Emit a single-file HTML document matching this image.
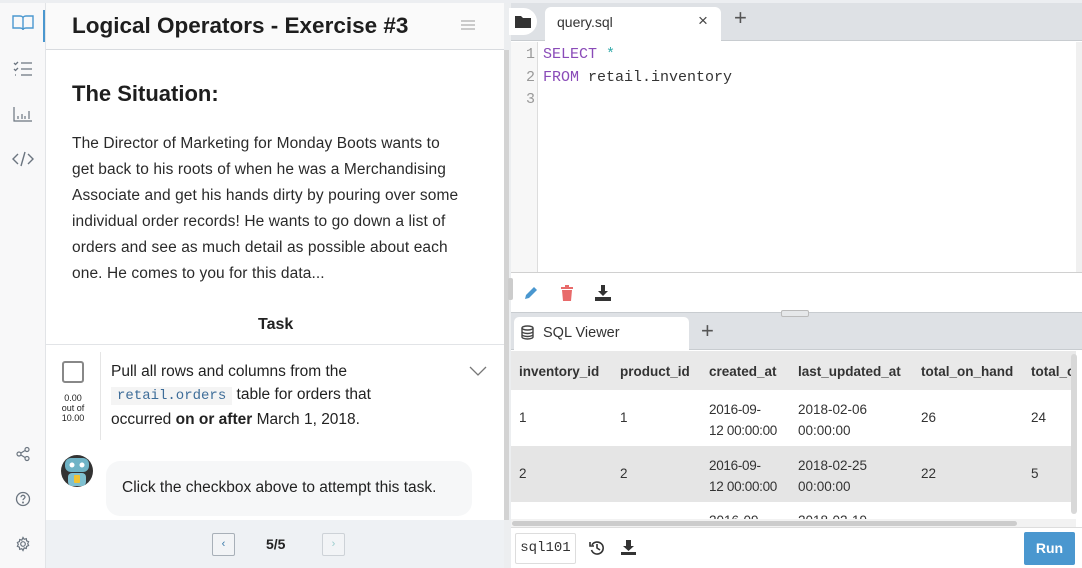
<!DOCTYPE html>
<html><head><meta charset="utf-8"><style>
*{box-sizing:border-box;margin:0;padding:0}
body{width:1082px;height:568px;overflow:hidden;background:#fff;font-family:"Liberation Sans",sans-serif;color:#222;position:relative}
.abs{position:absolute}
.mono{font-family:"Liberation Mono",monospace}
.nw{white-space:nowrap}
</style></head><body>
<div class="abs" style="left:0;top:0;width:1082px;height:3px;background:#eceef1"></div>
<div class="abs" style="left:0;top:3px;width:46px;height:565px;background:#f8f8f9;border-right:1px solid #e2e4e7"></div>
<div class="abs" style="left:43px;top:10px;width:2px;height:32px;background:#4a97cf"></div>
<svg class="abs" style="left:12px;top:14px" width="22" height="18" viewBox="0 0 22 18" fill="none" stroke="#4a97cf" stroke-width="1.4"><path d="M1 2h7c2 0 3 1 3 2v12c0-1-1-2-3-2H1z M21 2h-7c-2 0-3 1-3 2v12c0-1 1-2 3-2h7z"/></svg>
<svg class="abs" style="left:13px;top:61px" width="20" height="16" viewBox="0 0 20 16" fill="none" stroke="#6b7580" stroke-width="1.3"><path d="M1 2l1.5 1.5L5 1 M8 2h11 M1 8l1.5 1.5L5 7 M8 8h11 M2 14h1 M8 14h11"/></svg>
<svg class="abs" style="left:13px;top:106px" width="20" height="16" viewBox="0 0 20 16" fill="none" stroke="#6b7580" stroke-width="1.2"><path d="M1 1v14h18 M5 13v-3 M9 13v-5 M12 13v-3 M16 13v-8"/></svg>
<svg class="abs" style="left:11px;top:150px" width="24" height="18" viewBox="0 0 24 18" fill="none" stroke="#6b7580" stroke-width="1.4"><path d="M7 4L2 9l5 5 M17 4l5 5-5 5 M14 2l-4 14"/></svg>
<svg class="abs" style="left:15px;top:446px" width="16" height="16" viewBox="0 0 16 16" fill="none" stroke="#6b7580" stroke-width="1.2"><circle cx="4" cy="8" r="2"/><circle cx="12" cy="3.5" r="2"/><circle cx="12" cy="12.5" r="2"/><path d="M6 7l4-2.5 M6 9l4 2.5"/></svg>
<svg class="abs" style="left:15px;top:491px" width="16" height="16" viewBox="0 0 16 16" fill="none" stroke="#6b7580" stroke-width="1.3"><circle cx="8" cy="8" r="6.5"/><path d="M6 6.3c0-1.2 1-2 2-2s2 .8 2 1.8c0 1.5-2 1.5-2 3"/><circle cx="8" cy="11.5" r=".4"/></svg>
<svg class="abs" style="left:15px;top:536px" width="16" height="16" viewBox="0 0 16 16" fill="none" stroke="#6b7580" stroke-width="1.2"><circle cx="8" cy="8" r="2.3"/><path d="M8 1.5l1.2 1.8 2.1-.6.3 2.1 2 .9-.9 1.9.9 1.9-2 .9-.3 2.1-2.1-.6L8 14.5l-1.2-1.8-2.1.6-.3-2.1-2-.9.9-1.9-.9-1.9 2-.9.3-2.1 2.1.6z"/></svg>

<div class="abs" style="left:46px;top:3px;width:458px;height:47px;background:#fafafa;border-bottom:1px solid #d8dbdf"></div>
<div class="abs nw" style="left:72px;top:13px;font-size:22.5px;font-weight:bold;color:#1e1e1e">Logical Operators - Exercise #3</div>
<svg class="abs" style="left:461px;top:20px" width="14" height="10"><path d="M0 1h14M0 5h14M0 9h14" stroke="#999" stroke-width="1"/></svg>
<div class="abs" style="left:504px;top:3px;width:7px;height:565px;background:#eceef0"></div>
<div class="abs" style="left:504px;top:50px;width:5px;height:470px;background:#d3d3d3"></div>

<div class="abs nw" style="left:72px;top:81px;font-size:22px;font-weight:bold;color:#1e1e1e">The Situation:</div>
<div class="abs nw" style="left:72px;top:131px;font-size:15.5px;line-height:26px;color:#2a2a2a;letter-spacing:0.1px">The Director of Marketing for Monday Boots wants to<br>get back to his roots of when he was a Merchandising<br>Associate and get his hands dirty by pouring over some<br>individual order records! He wants to go down a list of<br>orders and see as much detail as possible about each<br>one. He comes to you for this data...</div>
<div class="abs" style="left:258px;top:316px;font-size:16px;font-weight:bold;color:#222">Task</div>
<div class="abs" style="left:46px;top:344px;width:458px;height:1px;background:#e2e4e7"></div>
<div class="abs" style="left:62px;top:361px;width:22px;height:22px;border:2px solid #888;border-radius:3px"></div>
<div class="abs" style="left:56px;top:393px;width:34px;text-align:center;font-size:9px;line-height:10px;color:#222">0.00<br>out of<br>10.00</div>
<div class="abs" style="left:100px;top:352px;width:1px;height:88px;background:#e5e5e5"></div>
<div class="abs nw" style="left:111px;top:360px;font-size:15.5px;line-height:23px;color:#222">Pull all rows and columns from the<br><span class="mono" style="background:#f4f4f4;color:#3e6d99;font-size:14px;padding:1px 6px">retail.orders</span> table for orders that<br>occurred <b>on or after</b> March 1, 2018.</div>
<svg class="abs" style="left:469px;top:366px" width="18" height="10"><path d="M1 1l8 8 8-8" fill="none" stroke="#777" stroke-width="1.3"/></svg>
<svg class="abs" style="left:60px;top:454px" width="34" height="34" viewBox="0 0 34 34"><circle cx="17" cy="17" r="16" fill="#333"/><rect x="5" y="4" width="24" height="14" rx="6" fill="#6fb3c6"/><circle cx="12" cy="11" r="2.5" fill="#fff"/><circle cx="22" cy="11" r="2.5" fill="#fff"/><rect x="8" y="19" width="18" height="13" rx="4" fill="#7fc0d0"/><rect x="14" y="21" width="6" height="8" rx="1" fill="#f2c230"/></svg>
<div class="abs" style="left:106px;top:461px;width:366px;height:55px;background:#f6f7f8;border-radius:14px"></div>
<div class="abs nw" style="left:122px;top:479px;font-size:15.5px;color:#222">Click the checkbox above to attempt this task.</div>
<div class="abs" style="left:46px;top:520px;width:458px;height:48px;background:#eef1f4"></div>
<div class="abs" style="left:212px;top:533px;width:23px;height:23px;border:1px solid #a8b0b8;border-radius:2px;background:#f2f4f6;font-size:11px;color:#3878a8;text-align:center;line-height:21px">‹</div>
<div class="abs" style="left:266px;top:536px;font-size:14px;font-weight:bold">5/5</div>
<div class="abs" style="left:322px;top:533px;width:23px;height:23px;border:1px solid #cdd2d7;border-radius:2px;background:#f2f4f6;font-size:11px;color:#9cc;text-align:center;line-height:21px">›</div>

<div class="abs" style="left:511px;top:3px;width:571px;height:38px;background:#dee1e5;border-bottom:1px solid #c8ccd0"></div>
<div class="abs" style="left:509px;top:8px;width:28px;height:27px;background:#fff;border-radius:0 14px 14px 0"></div>
<svg class="abs" style="left:515px;top:15px" width="16" height="13"><path d="M0 1h6l2 2h8v10H0z" fill="#333"/></svg>
<div class="abs" style="left:545px;top:7px;width:176px;height:35px;background:#fff;border-radius:6px 6px 0 0"></div>
<div class="abs" style="left:557px;top:14px;font-size:14px;color:#333">query.sql</div>
<div class="abs" style="left:698px;top:11px;font-size:17px;color:#444">×</div>
<div class="abs" style="left:734px;top:5px;font-size:22px;color:#555">+</div>
<div class="abs" style="left:511px;top:42px;width:27px;height:230px;background:#f7f7f7;border-right:1px solid #ddd"></div>
<div class="abs mono" style="left:511px;top:44px;width:24px;text-align:right;font-size:15px;line-height:22.5px;color:#999">1<br>2<br>3</div>
<div class="abs mono nw" style="left:543px;top:44px;font-size:15px;line-height:22.5px;color:#333"><span style="color:#8a4bb8">SELECT</span> <span style="color:#3aa">*</span><br><span style="color:#8a4bb8">FROM</span> retail.inventory</div>
<div class="abs" style="left:1076px;top:42px;width:6px;height:230px;background:#f0f0f0"></div>
<div class="abs" style="left:511px;top:272px;width:571px;height:1px;background:#d0d0d0"></div>
<div class="abs" style="left:508px;top:278px;width:5px;height:22px;background:#ccc;border-radius:2px"></div>
<svg class="abs" style="left:523px;top:285px" width="16" height="16"><path d="M2 14l1-4 8-8 3 3-8 8z" fill="#4a97cf"/></svg>
<svg class="abs" style="left:560px;top:285px" width="14" height="16"><path d="M1 2h12v2H1z M5 0h4v2H5z M2 5h10l-1 11H3z" fill="#e86a6a"/></svg>
<svg class="abs" style="left:595px;top:285px" width="16" height="16"><path d="M6 0h4v6h3l-5 5-5-5h3z M0 12h16v4H0z" fill="#333"/></svg>
<div class="abs" style="left:511px;top:312px;width:571px;height:38px;background:#dee1e5;border-top:1px solid #c8ccd0;border-bottom:1px solid #c8ccd0"></div>
<div class="abs" style="left:781px;top:310px;width:28px;height:7px;background:#e6e8ea;border:1px solid #bbb;border-radius:2px"></div>
<div class="abs" style="left:514px;top:317px;width:175px;height:33px;background:#fff;border-radius:5px 5px 0 0"></div>
<svg class="abs" style="left:521px;top:325px" width="13" height="15"><g fill="none" stroke="#444" stroke-width="1.4"><ellipse cx="6.5" cy="3" rx="5.5" ry="2"/><path d="M1 3v9c0 1 2.5 2 5.5 2s5.5-1 5.5-2V3 M1 6.5c0 1 2.5 2 5.5 2s5.5-1 5.5-2 M1 9.5c0 1 2.5 2 5.5 2s5.5-1 5.5-2"/></g></svg>
<div class="abs" style="left:543px;top:325px;font-size:14.5px;color:#333">SQL Viewer</div>
<div class="abs" style="left:701px;top:318px;font-size:22px;color:#555">+</div>
<div class="abs" style="left:511px;top:351px;width:565px;height:39px;background:#e9e9e9"></div>
<div class="abs" style="left:511px;top:446px;width:565px;height:56px;background:#e5e5e5"></div>
<div class="abs" style="left:0;top:0;font-size:13.5px;color:#333">
<div class="abs nw" style="left:519px;top:364px;font-weight:bold">inventory_id</div>
<div class="abs nw" style="left:620px;top:364px;font-weight:bold">product_id</div>
<div class="abs nw" style="left:709px;top:364px;font-weight:bold">created_at</div>
<div class="abs nw" style="left:798px;top:364px;font-weight:bold">last_updated_at</div>
<div class="abs nw" style="left:921px;top:364px;font-weight:bold">total_on_hand</div>
<div class="abs nw" style="left:1031px;top:364px;font-weight:bold;width:40px;overflow:hidden">total_on</div>
<div class="abs" style="left:519px;top:410px">1</div><div class="abs" style="left:620px;top:410px">1</div>
<div class="abs nw" style="left:709px;top:399px;line-height:21px;letter-spacing:-0.3px">2016-09-<br>12 00:00:00</div>
<div class="abs nw" style="left:798px;top:399px;line-height:21px">2018-02-06<br>00:00:00</div>
<div class="abs" style="left:921px;top:410px">26</div><div class="abs" style="left:1031px;top:410px">24</div>
<div class="abs" style="left:519px;top:466px">2</div><div class="abs" style="left:620px;top:466px">2</div>
<div class="abs nw" style="left:709px;top:455px;line-height:21px;letter-spacing:-0.3px">2016-09-<br>12 00:00:00</div>
<div class="abs nw" style="left:798px;top:455px;line-height:21px">2018-02-25<br>00:00:00</div>
<div class="abs" style="left:921px;top:466px">22</div><div class="abs" style="left:1031px;top:466px">5</div>
<div class="abs nw" style="left:709px;top:510px;height:9px;overflow:hidden;line-height:21px">2016-09-</div>
<div class="abs nw" style="left:798px;top:510px;height:9px;overflow:hidden;line-height:21px">2018-02-19</div>
</div>
<div class="abs" style="left:511px;top:519px;width:565px;height:8px;background:#f2f2f2"></div>
<div class="abs" style="left:512px;top:521px;width:505px;height:5px;background:#ccc;border-radius:3px"></div>
<div class="abs" style="left:1071px;top:354px;width:6px;height:160px;background:#d8d8d8;border-radius:3px"></div>
<div class="abs" style="left:511px;top:527px;width:571px;height:1px;background:#ddd"></div>
<div class="abs mono" style="left:515px;top:533px;width:61px;height:31px;border:1px solid #ddd;border-radius:2px;font-size:14px;line-height:29px;text-align:center;color:#333">sql101</div>
<svg class="abs" style="left:589px;top:540px" width="16" height="16" viewBox="0 0 16 16" fill="none" stroke="#333" stroke-width="1.6"><path d="M3 5a6 6 0 1 1-.5 5 M1 2v4h4 M8 4v4l3 2"/></svg>
<svg class="abs" style="left:621px;top:540px" width="15" height="15"><path d="M5 0h5v6h3l-5.5 5L2 6h3z M0 12h15v3H0z" fill="#333"/></svg>
<div class="abs" style="left:1024px;top:532px;width:51px;height:33px;background:#4a97cf;border-radius:2px;color:#fff;font-weight:bold;font-size:14px;text-align:center;line-height:33px">Run</div>
</body></html>
